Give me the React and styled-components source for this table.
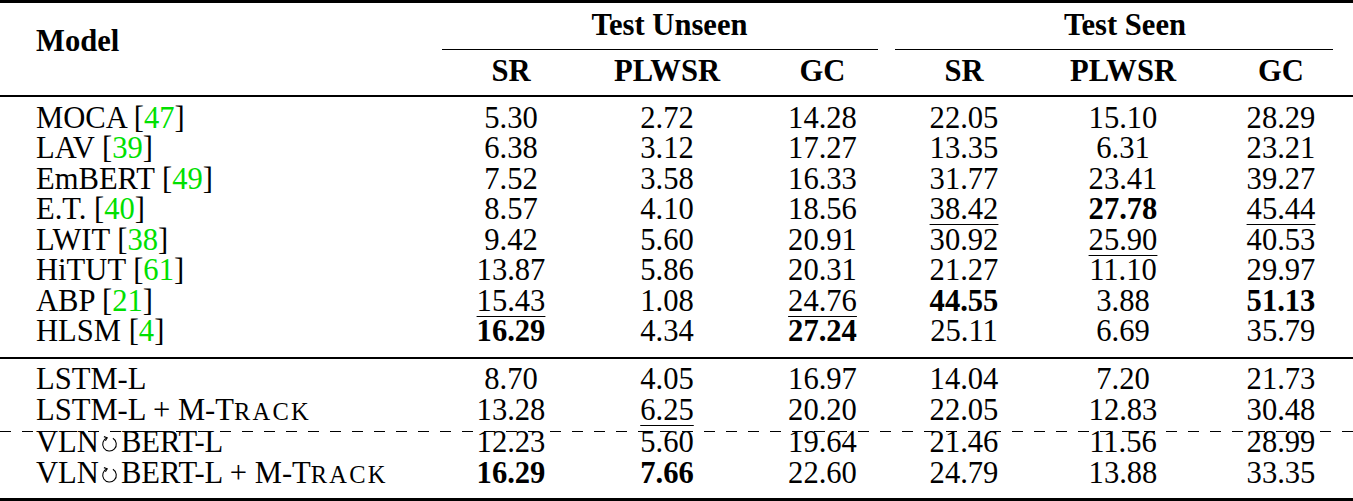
import React from "react";
import styled, { createGlobalStyle } from "styled-components";

// column widths picked so each column's centre lands where the reference has it
const COLS = "442px 138px 174px 137px 146px 172px 144px";
const ROW_H = 30.5;

const GlobalStyle = createGlobalStyle`
  html, body {
    margin: 0;
    padding: 0;
    background: #fff;
  }
  body {
    font-family: "Liberation Serif", "Times New Roman", serif;
    color: #000;
  }
`;

const TOP_ROWS = [
  { name: "MOCA", cite: "47", cells: ["5.30", "2.72", "14.28", "22.05", "15.10", "28.29"] },
  { name: "LAV", cite: "39", cells: ["6.38", "3.12", "17.27", "13.35", "6.31", "23.21"] },
  { name: "EmBERT", cite: "49", cells: ["7.52", "3.58", "16.33", "31.77", "23.41", "39.27"] },
  { name: "E.T.", cite: "40", cells: ["8.57", "4.10", "18.56", "_38.42", "*27.78", "_45.44"] },
  { name: "LWIT", cite: "38", cells: ["9.42", "5.60", "20.91", "30.92", "_25.90", "40.53"] },
  { name: "HiTUT", cite: "61", cells: ["13.87", "5.86", "20.31", "21.27", "11.10", "29.97"] },
  { name: "ABP", cite: "21", cells: ["_15.43", "1.08", "_24.76", "*44.55", "3.88", "*51.13"] },
  { name: "HLSM", cite: "4", cells: ["*16.29", "4.34", "*27.24", "25.11", "6.69", "35.79"] },
];

const LSTM_ROWS = [
  { name: "LSTM-L", cells: ["8.70", "4.05", "16.97", "14.04", "7.20", "21.73"] },
  { name: "LSTM-L", track: true, cells: ["13.28", "_6.25", "20.20", "22.05", "12.83", "30.48"] },
];

const VLN_ROWS = [
  { name: "VLN", vln: true, cells: ["12.23", "5.60", "19.64", "21.46", "11.56", "28.99"] },
  { name: "VLN", vln: true, track: true, cells: ["*16.29", "*7.66", "22.60", "24.79", "13.88", "33.35"] },
];

const Table = styled.div`
  width: 1353px;
  border-top: 3px solid #000;
  border-bottom: 4px solid #000;
  font-size: 30.6px;
  line-height: ${ROW_H}px;
`;

const Head = styled.div`
  display: grid;
  grid-template-columns: ${COLS};
  grid-template-rows: auto auto;
  font-weight: 700;
`;

const ModelHead = styled.div`
  grid-row: 1 / 3;
  padding: 23.3px 0 0 36px;
`;

const Group = styled.div`
  grid-column: ${(p) => p.$cols};
  padding-top: 6.6px;
  text-align: center;
`;

const GroupTitle = styled.div`
  padding-left: 6px;
`;

const CmidRule = styled.div`
  height: 1px;
  background: #000;
  margin: 9.2px ${(p) => p.$right}px 0 ${(p) => p.$left}px;
`;

const SubHead = styled.div`
  padding: 6px 0 8.7px;
  text-align: center;
`;

const MidRule = styled.div`
  height: 2px;
  background: #000;
`;

const Block = styled.div`
  padding: ${(p) => p.$top}px 0 ${(p) => p.$bottom}px;
`;

const Row = styled.div`
  display: grid;
  grid-template-columns: ${COLS};
  height: ${ROW_H}px;
  white-space: nowrap;
`;

const Name = styled.div`
  padding-left: 36px;
`;

const Cite = styled.span`
  color: #00e000;
`;

const SmallCaps = styled.span`
  font-size: 0.8em;
  letter-spacing: 2.2px;
`;

const Num = styled.div`
  text-align: center;
  font-weight: ${(p) => (p.$bold ? 700 : 400)};
`;

const Under = styled.span`
  text-decoration: underline;
  text-decoration-thickness: 1px;
  text-underline-offset: 5px;
  text-decoration-skip-ink: none;
`;

const DashRule = styled.div`
  height: 1px;
  margin: 5.6px 0 -4.4px;
  background: repeating-linear-gradient(
    to right,
    #000 0 11px,
    transparent 11px 22px
  );
`;

const Cycle = styled.svg`
  width: 19px;
  height: 19px;
  vertical-align: 0;
  margin: 0 1.5px;
`;

function CircleArrow() {
  return (
    <Cycle viewBox="0 0 19 19" fill="none" stroke="#000" strokeWidth="1.1">
      <path d="M12.9 5.31 A6.8 6.8 0 1 1 7.17 4.81" />
      <path d="M5.42 7.84 L7.17 4.81 L3.88 3.61" />
    </Cycle>
  );
}

function Cell({ value }) {
  const bold = value.startsWith("*");
  const under = value.startsWith("_");
  const text = bold || under ? value.slice(1) : value;
  return <Num $bold={bold}>{under ? <Under>{text}</Under> : text}</Num>;
}

function ModelName({ row }) {
  return (
    <Name>
      {row.vln ? (
        <>
          VLN
          <CircleArrow />
          BERT-L
        </>
      ) : (
        row.name
      )}
      {row.track && (
        <>
          {" + M-T"}
          <SmallCaps>RACK</SmallCaps>
        </>
      )}
      {row.cite && (
        <>
          {" ["}
          <Cite>{row.cite}</Cite>]
        </>
      )}
    </Name>
  );
}

function DataRow({ row }) {
  return (
    <Row>
      <ModelName row={row} />
      {row.cells.map((c, i) => (
        <Cell key={i} value={c} />
      ))}
    </Row>
  );
}

export default function App() {
  return (
    <>
      <GlobalStyle />
      <Table>
        <Head>
          <ModelHead>Model</ModelHead>
          <Group $cols="2 / 5">
            <GroupTitle>Test Unseen</GroupTitle>
            <CmidRule $left={0} $right={13} />
          </Group>
          <Group $cols="5 / 8">
            <GroupTitle>Test Seen</GroupTitle>
            <CmidRule $left={4} $right={20} />
          </Group>
          {["SR", "PLWSR", "GC", "SR", "PLWSR", "GC"].map((h, i) => (
            <SubHead key={i}>{h}</SubHead>
          ))}
        </Head>
        <MidRule />
        <Block $top={5.4} $bottom={10.1}>
          {TOP_ROWS.map((r) => (
            <DataRow key={r.name} row={r} />
          ))}
        </Block>
        <MidRule />
        <Block $top={5.1} $bottom={9.6}>
          {LSTM_ROWS.map((r, i) => (
            <DataRow key={i} row={r} />
          ))}
          <DashRule />
          {VLN_ROWS.map((r, i) => (
            <DataRow key={i} row={r} />
          ))}
        </Block>
      </Table>
    </>
  );
}
